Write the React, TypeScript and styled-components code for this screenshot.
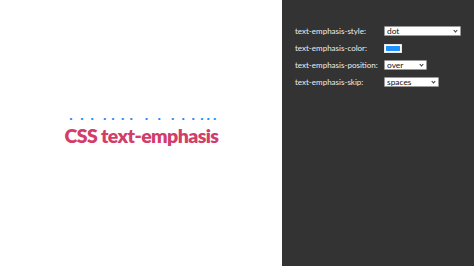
import React, { useState } from 'react'
import styled, { createGlobalStyle } from 'styled-components'

const GlobalStyle = createGlobalStyle`
  html, body {
    margin: 0;
    padding: 0;
    height: 100%;
  }
  #root {
    height: 100%;
  }
`

const Page = styled.div`
  display: flex;
  width: 100%;
  height: 100vh;
  font-family: Lato, "Open Sans", sans-serif;
`

const Stage = styled.div`
  flex: 1;
  background: #fff;
  display: flex;
  align-items: center;
  justify-content: center;
`

const Heading = styled.h1<{ $style: string; $color: string; $position: string }>`
  margin: 0 0 5px 1px;
  font-size: 19.5px;
  font-weight: 800;
  letter-spacing: -0.6px;
  color: #d23e69;
  line-height: 1.3;
  text-emphasis-style: ${(p) => p.$style};
  text-emphasis-color: ${(p) => p.$color};
  text-emphasis-position: ${(p) => p.$position};
  -webkit-text-emphasis-style: ${(p) => p.$style};
  -webkit-text-emphasis-color: ${(p) => p.$color};
  -webkit-text-emphasis-position: ${(p) => p.$position};
`

const Panel = styled.aside`
  width: 192px;
  background: #333;
  padding: 25px 13px 0 13px;
  box-sizing: border-box;
  display: flex;
  flex-direction: column;
  gap: 5px;
`

const Row = styled.label`
  display: grid;
  grid-template-columns: 89px auto;
  align-items: center;
  height: 12px;
  color: #eee;
  font-size: 8px;
`

const SelectWrap = styled.span<{ $width: number }>`
  position: relative;
  display: inline-block;
  width: ${(p) => p.$width}px;
  height: 10px;

  &::after {
    content: '';
    position: absolute;
    right: 4px;
    top: 2.5px;
    width: 2px;
    height: 2px;
    border-right: 1px solid #333;
    border-bottom: 1px solid #333;
    transform: rotate(45deg);
    pointer-events: none;
  }
`

const Select = styled.select`
  width: 100%;
  height: 10px;
  padding: 0 0 0 2px;
  font-size: 8.4px;
  line-height: 8px;
  font-family: Lato, sans-serif;
  border: 1px solid #999;
  border-radius: 1px;
  background: #fff;
  color: #111;
  box-sizing: border-box;
  appearance: none;
  -webkit-appearance: none;
  outline: none;
`

const Swatch = styled.input`
  width: 18px;
  height: 9px;
  padding: 0;
  border: 1px solid #e6e6e6;
  background: #fff;
  box-sizing: border-box;
  -webkit-appearance: none;
  appearance: none;
  &::-webkit-color-swatch-wrapper { padding: 1px; }
  &::-webkit-color-swatch { border: none; }
`

export default function App() {
  const [style, setStyle] = useState('dot')
  const [color, setColor] = useState('#1e90ff')
  const [position, setPosition] = useState('over')
  const [skip, setSkip] = useState('spaces')

  // the bare "dot" keyword draws big bullets; a middle dot keeps marks small
  const mark = style === 'dot' ? '"·"' : style

  return (
    <Page>
      <GlobalStyle />
      <Stage>
        <Heading $style={mark} $color={color} $position={position}>CSS text-emphasis</Heading>
      </Stage>
      <Panel>
        <Row>
          text-emphasis-style:
          <SelectWrap $width={77}>
            <Select value={style} onChange={(e) => setStyle(e.target.value)}>
              <option value="dot">dot</option>
              <option value="circle">circle</option>
              <option value="double-circle">double-circle</option>
              <option value="triangle">triangle</option>
              <option value="sesame">sesame</option>
            </Select>
          </SelectWrap>
        </Row>
        <Row>
          text-emphasis-color:
          <Swatch type="color" value={color} onChange={(e) => setColor(e.target.value)} />
        </Row>
        <Row>
          text-emphasis-position:
          <SelectWrap $width={43}>
            <Select value={position} onChange={(e) => setPosition(e.target.value)}>
              <option value="over">over</option>
              <option value="under">under</option>
            </Select>
          </SelectWrap>
        </Row>
        <Row>
          text-emphasis-skip:
          <SelectWrap $width={55}>
            <Select value={skip} onChange={(e) => setSkip(e.target.value)}>
              <option value="spaces">spaces</option>
              <option value="punctuation">punctuation</option>
              <option value="symbols">symbols</option>
              <option value="narrow">narrow</option>
            </Select>
          </SelectWrap>
        </Row>
      </Panel>
    </Page>
  )
}
